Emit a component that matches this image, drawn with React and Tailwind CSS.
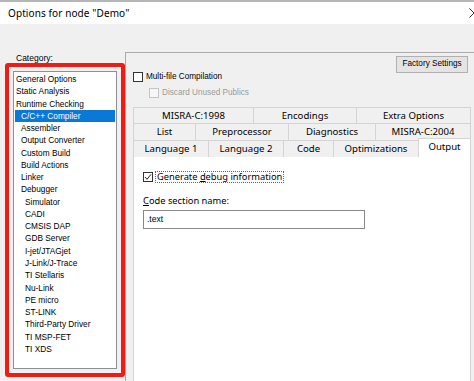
import React from "react";

const categories = [
  { label: "General Options", level: 0 },
  { label: "Static Analysis", level: 0 },
  { label: "Runtime Checking", level: 0 },
  { label: "C/C++ Compiler", level: 1, selected: true },
  { label: "Assembler", level: 1 },
  { label: "Output Converter", level: 1 },
  { label: "Custom Build", level: 1 },
  { label: "Build Actions", level: 1 },
  { label: "Linker", level: 1 },
  { label: "Debugger", level: 1 },
  { label: "Simulator", level: 2 },
  { label: "CADI", level: 2 },
  { label: "CMSIS DAP", level: 2 },
  { label: "GDB Server", level: 2 },
  { label: "I-jet/JTAGjet", level: 2 },
  { label: "J-Link/J-Trace", level: 2 },
  { label: "TI Stellaris", level: 2 },
  { label: "Nu-Link", level: 2 },
  { label: "PE micro", level: 2 },
  { label: "ST-LINK", level: 2 },
  { label: "Third-Party Driver", level: 2 },
  { label: "TI MSP-FET", level: 2 },
  { label: "TI XDS", level: 2 },
];

const indent = ["pl-[2px]", "pl-[7px]", "pl-[11px]"];

const tabRows = [
  { cols: "grid-cols-[120px_103px_115px]", tabs: ["MISRA-C:1998", "Encodings", "Extra Options"] },
  { cols: "grid-cols-[62px_93px_87px_96px]", tabs: ["List", "Preprocessor", "Diagnostics", "MISRA-C:2004"] },
  { cols: "grid-cols-[75px_75px_50px_85px_53px]", tabs: ["Language 1", "Language 2", "Code", "Optimizations", "Output"] },
];

const Checkbox = ({ checked, disabled }) => (
  <div
    className={
      "w-[10px] h-[10px] shrink-0 border flex items-center justify-center " +
      (disabled ? "border-[#c4c4c4] bg-[#f7f7f7]" : "border-[#333333] bg-white")
    }
  >
    {checked && (
      <svg width="8" height="8" viewBox="0 0 8 8">
        <polyline points="1,4 3,6.3 7,1.3" fill="none" stroke="#222" strokeWidth="1" />
      </svg>
    )}
  </div>
);

const App = () => {
  return (
    <div className="w-[474px] h-[381px] overflow-hidden bg-[#f0f0f0] flex flex-col font-['Liberation_Sans',sans-serif] text-black">
      {/* title bar */}
      <div className="h-[24px] shrink-0 border-t-2 border-[#b5b5b5] bg-white relative flex items-center pl-[8px] text-[10px] font-['Noto_Sans',sans-serif] tracking-[0.1px]">
        Options for node "Demo"
        <svg className="absolute right-[-5px] top-[6px]" width="10" height="10" viewBox="0 0 10 10">
          <path d="M0.5 0.5 L9.5 9.5 M9.5 0.5 L0.5 9.5" stroke="#333" strokeWidth="1" />
        </svg>
      </div>

      <div className="flex flex-1 min-h-0">
        {/* category column */}
        <div className="w-[125px] shrink-0 pl-[5px] pt-[29px]">
          <div className="pl-[11px] h-[10px] leading-[10px] text-[8.5px]">Category:</div>
          <div className="w-[120px] h-[314px] border-[4px] border-[#f21b14] rounded-[3px] p-[4px]">
            <div className="h-full border border-[#8a8f98] bg-white pt-[1px] text-[8.3px] leading-[12.27px]">
              {categories.map((c) =>
                c.selected ? (
                  <div key={c.label} className="mx-[1px] pl-[6px] bg-[#0a78d7] text-white">
                    {c.label}
                  </div>
                ) : (
                  <div key={c.label} className={indent[c.level]}>
                    {c.label}
                  </div>
                )
              )}
            </div>
          </div>
        </div>

        {/* options panel */}
        <div className="flex-1 mt-[28px] border-t border-l border-[#a9a9a9] flex flex-col text-[8.2px]">
          <div className="flex justify-end pt-[3px] pr-[6px]">
            <div className="w-[72px] h-[17px] border border-[#b0b0b0] bg-[#e4e4e4] flex items-center justify-center">
              Factory Settings
            </div>
          </div>
          <div className="flex items-center gap-[3px] pl-[7px] h-[10px] -mt-[1px]">
            <Checkbox />
            <span>Multi-file Compilation</span>
          </div>
          <div className="flex items-center gap-[3px] pl-[23px] h-[10px] mt-[6px] text-[#9a9a9a]">
            <Checkbox disabled />
            <span>Discard Unused Publics</span>
          </div>

          {/* tabs */}
          <div className="mt-[9px] ml-[7px] mr-[3px] flex-1 flex flex-col font-['Noto_Sans',sans-serif] text-[9.6px]">
            {tabRows.map((row, r) => (
              <div key={r} className={"grid items-end " + row.cols + (r === 0 ? " h-[16px]" : " h-[17px]")}>
                {row.tabs.map((t, i) => {
                  const last = i === row.tabs.length - 1;
                  if (t === "Output") {
                    return (
                      <div
                        key={t}
                        className="relative z-10 h-[19px] -mt-[2px] bg-white border-l border-t border-r border-[#d4d4d4] flex items-center justify-center pb-[1px]"
                      >
                        {t}
                      </div>
                    );
                  }
                  return (
                    <div
                      key={t}
                      className={
                        "h-full bg-[#f0f0f0] border-t border-l border-[#d4d4d4] flex items-center justify-center leading-none" +
                        (last ? " border-r" : "")
                      }
                    >
                      {t}
                    </div>
                  );
                })}
              </div>
            ))}

            {/* tab page */}
            <div className="flex-1 bg-white border-l border-r border-[#d4d4d4] pl-[9px] pt-[14px] text-[9.3px]">
              <div className="flex items-center gap-[2px] h-[12px]">
                <Checkbox checked />
                <span className="border border-dotted border-[#666] px-[1px] h-[12px] leading-[10px]">
                  Generate <span className="underline">d</span>ebug information
                </span>
              </div>
              <div className="mt-[12px] leading-[12px]">
                <span className="underline">C</span>ode section name:
              </div>
              <div className="mt-[3px] w-[222px] h-[19px] border border-[#8a8a8a] flex items-center pl-[3px] font-['Liberation_Sans',sans-serif] text-[8.5px]">
                .text
              </div>
            </div>
          </div>
        </div>
      </div>
    </div>
  );
};

export default App;
